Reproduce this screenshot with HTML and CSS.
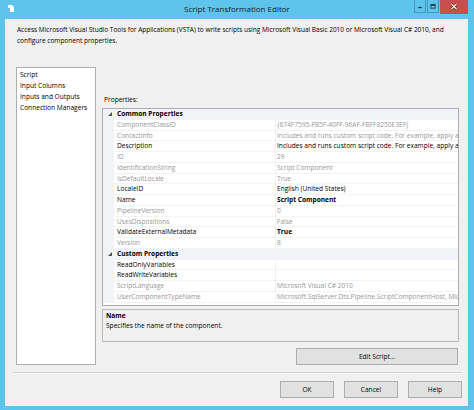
FILE: index.html
```html
<!DOCTYPE html>
<html>
<head>
<meta charset="utf-8">
<link rel="stylesheet" href="styles.css">
</head>
<body>
<div class="window">
  <div class="titlebar">
    <div class="tb-left">
      <svg class="app-icon" width="6" height="7" viewBox="0 0 6 7"><polygon points="0,0 4,0 6,2 6,7 2,7 2,3 0,3" fill="#ffffff"/></svg>
    </div>
    <div class="title">Script Transformation Editor</div>
    <div class="controls">
      <div class="ctl ctl-min"><svg width="12" height="13" viewBox="0 0 12 13"><rect x="4" y="7" width="4" height="1.5" fill="#1b2f3c"/></svg></div>
      <div class="ctl ctl-max"><svg width="12" height="13" viewBox="0 0 12 13"><rect x="3.5" y="4" width="5" height="4.5" fill="none" stroke="#1b2f3c" stroke-width="1"/><rect x="3.5" y="4" width="5" height="1.6" fill="#1b2f3c"/></svg></div>
      <div class="ctl ctl-close"><svg width="28" height="13" viewBox="0 0 28 13"><path d="M11.5 4 L16.5 9 M16.5 4 L11.5 9" stroke="#3b1414" stroke-width="2.2"/><path d="M11.5 4 L16.5 9 M16.5 4 L11.5 9" stroke="#ffffff" stroke-width="1.1"/></svg></div>
    </div>
  </div>
  <div class="client">
    <p class="intro">Access Microsoft Visual Studio Tools for Applications (VSTA) to write scripts using Microsoft Visual Basic 2010 or Microsoft Visual C# 2010, and<br>configure component properties.</p>
    <div class="main">
      <ul class="nav">
        <li>Script</li>
        <li>Input Columns</li>
        <li>Inputs and Outputs</li>
        <li>Connection Managers</li>
      </ul>
      <div class="pane">
        <div class="props-label">Properties:</div>
        <div class="grid">
          <div class="row cat"><span class="strip"><svg width="4" height="4" viewBox="0 0 4 4"><polygon points="4,0 4,4 0,4" fill="#555"/></svg></span><span class="cat-name">Common Properties</span></div>
          <div class="row ro"><span class="strip"></span><span class="name">ComponentClassID</span><span class="val">{874F7595-FB5F-40FF-96AF-FBFF8250E3EF}</span></div>
          <div class="row ro"><span class="strip"></span><span class="name">ContactInfo</span><span class="val">Includes and runs custom script code. For example, apply a business rule that limits the range of valid values</span></div>
          <div class="row"><span class="strip"></span><span class="name">Description</span><span class="val">Includes and runs custom script code. For example, apply a business rule that limits the range of valid values</span></div>
          <div class="row ro"><span class="strip"></span><span class="name">ID</span><span class="val">29</span></div>
          <div class="row ro"><span class="strip"></span><span class="name">IdentificationString</span><span class="val">Script Component</span></div>
          <div class="row ro"><span class="strip"></span><span class="name">IsDefaultLocale</span><span class="val">True</span></div>
          <div class="row"><span class="strip"></span><span class="name">LocaleID</span><span class="val">English (United States)</span></div>
          <div class="row"><span class="strip"></span><span class="name">Name</span><span class="val mod">Script Component</span></div>
          <div class="row ro"><span class="strip"></span><span class="name">PipelineVersion</span><span class="val">0</span></div>
          <div class="row ro"><span class="strip"></span><span class="name">UsesDispositions</span><span class="val">False</span></div>
          <div class="row"><span class="strip"></span><span class="name">ValidateExternalMetadata</span><span class="val mod">True</span></div>
          <div class="row ro"><span class="strip"></span><span class="name">Version</span><span class="val">8</span></div>
          <div class="row cat"><span class="strip"><svg width="4" height="4" viewBox="0 0 4 4"><polygon points="4,0 4,4 0,4" fill="#555"/></svg></span><span class="cat-name">Custom Properties</span></div>
          <div class="row"><span class="strip"></span><span class="name">ReadOnlyVariables</span><span class="val"></span></div>
          <div class="row"><span class="strip"></span><span class="name">ReadWriteVariables</span><span class="val"></span></div>
          <div class="row ro"><span class="strip"></span><span class="name">ScriptLanguage</span><span class="val">Microsoft Visual C# 2010</span></div>
          <div class="row ro"><span class="strip"></span><span class="name">UserComponentTypeName</span><span class="val">Microsoft.SqlServer.Dts.Pipeline.ScriptComponentHost, Microsoft.SqlServer.TxScript</span></div>
        </div>
        <div class="help-panel">
          <div class="help-title">Name</div>
          <div class="help-text">Specifies the name of the component.</div>
        </div>
        <div class="edit-row"><button class="btn edit-btn">Edit Script...</button></div>
      </div>
    </div>
    <div class="separator"></div>
    <div class="footer">
      <button class="btn">OK</button>
      <button class="btn">Cancel</button>
      <button class="btn">Help</button>
    </div>
  </div>
</div>
</body>
</html>
```

FILE: styles.css
```css
* { box-sizing: border-box; }
html, body { margin: 0; padding: 0; }
body {
  font-family: "Open Sans", "Noto Sans", "Liberation Sans", sans-serif;
  font-size: 6.6px;
  color: #000;
  background: #5fc4eb;
}
.window {
  width: 474px;
  height: 410px;
  background: #5fc4eb;
  padding: 0 6px 4px 5px;
  display: flex;
  flex-direction: column;
}
.titlebar {
  height: 19px;
  display: grid;
  grid-template-columns: 1fr auto 1fr;
  align-items: start;
  margin-left: -5px;
  margin-right: -6px;
}
.tb-left { padding: 5px 0 0 8px; }
.app-icon { display: block; }
.title {
  font-size: 8px;
  line-height: 18px;
  color: #1a1a1a;
  white-space: nowrap;
}
.controls {
  justify-self: end;
  display: flex;
  gap: 1px;
  padding-right: 6px;
}
.ctl { height: 13px; }
.ctl svg { display: block; }
.ctl-min, .ctl-max {
  width: 12px;
  border: 1px solid rgba(20, 70, 100, 0.35);
  border-top: none;
  display: flex;
  align-items: center;
  justify-content: center;
}
.ctl-min svg, .ctl-max svg { width: 10px; }
.ctl-close {
  width: 28px;
  background: #c74f4f;
  height: 14px;
}
.client {
  flex: 1;
  background: #f0f0f0;
  display: flex;
  flex-direction: column;
}
.intro {
  margin: 0;
  padding: 6px 0 0 12px;
  font-size: 6.5px;
  line-height: 10.5px;
  height: 27px;
  white-space: nowrap;
}
.main {
  margin-top: 21px;
  height: 298px;
  display: flex;
  padding-left: 11px;
  gap: 6px;
}
.nav {
  list-style: none;
  margin: 0;
  padding: 0.5px 0 0 3px;
  width: 80px;
  height: 298px;
  background: #fff;
  border: 1px solid #abadb3;
}
.nav li { line-height: 11.3px; white-space: nowrap; color: #000; }
.pane {
  width: 357px;
  display: flex;
  flex-direction: column;
}
.props-label {
  height: 41px;
  padding: 28px 0 0 2px;
  line-height: 10px;
}
.grid {
  height: 198px;
  background: #fff;
  border: 1px solid #abadb3;
  overflow: hidden;
}
.row {
  height: 10.78px;
  display: grid;
  grid-template-columns: 11px 161px 1fr;
  align-items: stretch;
  line-height: 10px;
  white-space: nowrap;
}
.row > span { overflow: hidden; }
.strip {
  background: #f1f3f6;
  display: flex;
  align-items: center;
  justify-content: flex-end;
  padding-right: 2px;
}
.strip svg { display: block; }
.name {
  padding-left: 3px;
  border-bottom: 1px solid #f3f3f3;
}
.val {
  padding-left: 1px;
  border-left: 1px solid #f0f0f0;
  border-bottom: 1px solid #f3f3f3;
}
.val.mod { font-weight: bold; }
.ro .name, .ro .val { color: #979797; }
.cat { background: #f1f3f6; }
.cat .cat-name {
  grid-column: 2 / 4;
  padding-left: 3px;
  font-weight: bold;
}
.help-panel {
  margin-top: 3px;
  height: 33px;
  border: 1px solid #b9b9b9;
  background: #f0f0f0;
  padding: 0.5px 0 0 3px;
  line-height: 10px;
}
.help-title { font-weight: bold; }
.edit-row {
  margin-top: 6px;
  display: flex;
  justify-content: flex-end;
  padding-right: 1px;
}
.btn {
  font-family: inherit;
  font-size: 6.6px;
  color: #000;
  background: #e1e1e1;
  border: 1px solid #adadad;
  height: 17px;
  padding: 0;
  margin: 0;
}
.edit-btn { width: 162px; }
.separator {
  margin: 7px 0 0 8px;
  width: 449px;
  height: 1px;
  background: #d0d0d0;
  box-shadow: 0 1px 0 #fafafa;
}
.footer {
  margin-top: 8px;
  display: flex;
  justify-content: flex-end;
  gap: 10px;
  padding-right: 6px;
}
.footer .btn { width: 54px; }
```
